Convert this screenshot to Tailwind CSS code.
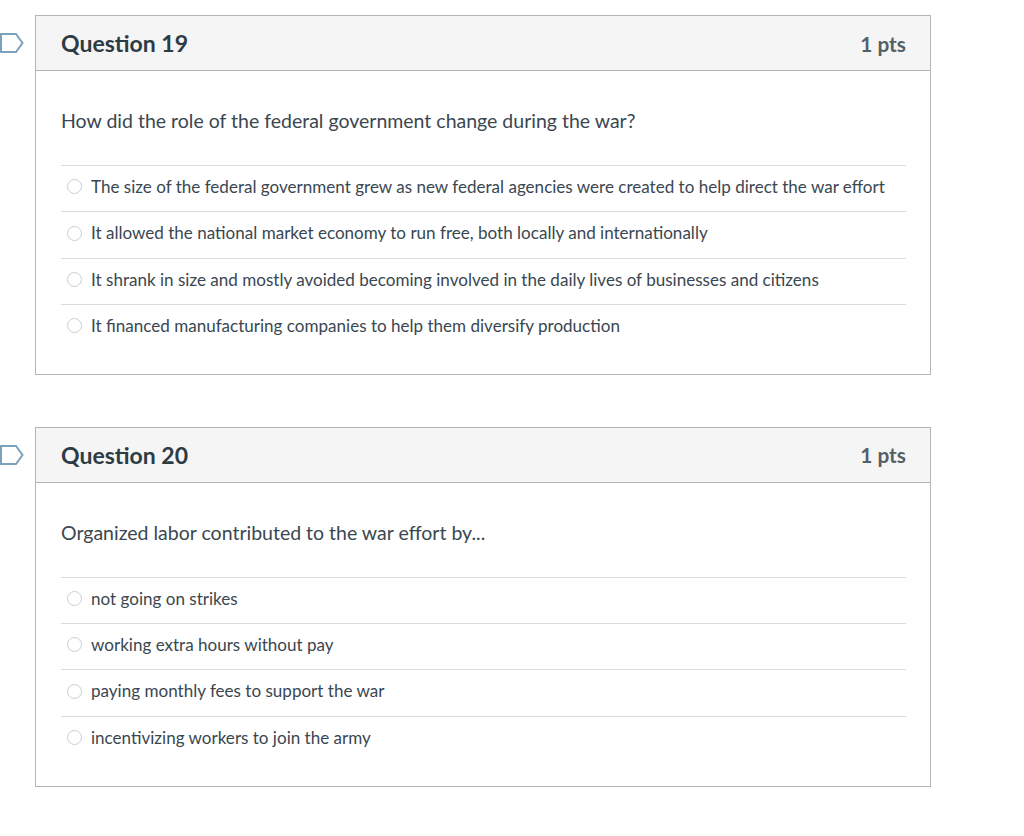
<!DOCTYPE html>
<html lang="en">
<head>
  <meta charset="UTF-8" />
  <title>Quiz</title>
  <script src="https://cdn.jsdelivr.net/npm/@tailwindcss/browser@4"></script>
</head>
<body class="bg-white text-[#2d3b45] font-['Lato',sans-serif]">
  <div class="pt-[15px] pl-[35px] w-[931px]">

    <!-- Question 19 -->
    <div class="relative border border-[#b5b5b5] mb-[52px]">
      <svg class="absolute left-[-36px] top-[16px]" width="24" height="22" viewBox="0 0 24 22" fill="none">
        <path d="M1 2H16L22.5 11L16 20H1Z" stroke="#7aa3bb" stroke-width="2" />
      </svg>
      <div class="flex justify-between items-center h-[55px] pl-[25px] pr-[24px] bg-[#f5f5f5] border-b border-[#b5b5b5]">
        <h2 class="text-[23px] font-bold">Question 19</h2>
        <span class="text-[20.8px] font-bold text-[#555f66] pt-[2px]">1 pts</span>
      </div>
      <div class="pl-[25px] pr-[24px] pt-[36px] pb-[24px]">
        <p class="text-[19.5px] leading-[28px] mb-[30px] text-[#3a4751]">How did the role of the federal government change during the war?</p>
        <div class="text-[17.06px] text-[#3a4751]">
          <div class="flex items-center h-[46px] pb-[4px] border-t border-[#dcdcdc]">
            <span class="w-[15px] h-[15px] rounded-full border border-[#c7cdd1] bg-white ml-[6px] mr-[9px]"></span>
            <span>The size of the federal government grew as new federal agencies were created to help direct the war effort</span>
          </div>
          <div class="flex items-center h-[47px] pb-[4px] border-t border-[#dcdcdc]">
            <span class="w-[15px] h-[15px] rounded-full border border-[#c7cdd1] bg-white ml-[6px] mr-[9px]"></span>
            <span>It allowed the national market economy to run free, both locally and internationally</span>
          </div>
          <div class="flex items-center h-[46px] pb-[4px] border-t border-[#dcdcdc]">
            <span class="w-[15px] h-[15px] rounded-full border border-[#c7cdd1] bg-white ml-[6px] mr-[9px]"></span>
            <span>It shrank in size and mostly avoided becoming involved in the daily lives of businesses and citizens</span>
          </div>
          <div class="flex items-center h-[46px] pb-[4px] border-t border-[#dcdcdc]">
            <span class="w-[15px] h-[15px] rounded-full border border-[#c7cdd1] bg-white ml-[6px] mr-[9px]"></span>
            <span>It financed manufacturing companies to help them diversify production</span>
          </div>
        </div>
      </div>
    </div>

    <!-- Question 20 -->
    <div class="relative border border-[#b5b5b5]">
      <svg class="absolute left-[-36px] top-[16px]" width="24" height="22" viewBox="0 0 24 22" fill="none">
        <path d="M1 2H16L22.5 11L16 20H1Z" stroke="#7aa3bb" stroke-width="2" />
      </svg>
      <div class="flex justify-between items-center h-[55px] pl-[25px] pr-[24px] bg-[#f5f5f5] border-b border-[#b5b5b5]">
        <h2 class="text-[23px] font-bold">Question 20</h2>
        <span class="text-[20.8px] font-bold text-[#555f66]">1 pts</span>
      </div>
      <div class="pl-[25px] pr-[24px] pt-[36px] pb-[24px]">
        <p class="text-[19.5px] leading-[28px] mb-[30px] text-[#3a4751]">Organized labor contributed to the war effort by...</p>
        <div class="text-[17.06px] text-[#3a4751]">
          <div class="flex items-center h-[46px] pb-[4px] border-t border-[#dcdcdc]">
            <span class="w-[15px] h-[15px] rounded-full border border-[#c7cdd1] bg-white ml-[6px] mr-[9px]"></span>
            <span>not going on strikes</span>
          </div>
          <div class="flex items-center h-[46px] pb-[4px] border-t border-[#dcdcdc]">
            <span class="w-[15px] h-[15px] rounded-full border border-[#c7cdd1] bg-white ml-[6px] mr-[9px]"></span>
            <span>working extra hours without pay</span>
          </div>
          <div class="flex items-center h-[47px] pb-[4px] border-t border-[#dcdcdc]">
            <span class="w-[15px] h-[15px] rounded-full border border-[#c7cdd1] bg-white ml-[6px] mr-[9px]"></span>
            <span>paying monthly fees to support the war</span>
          </div>
          <div class="flex items-center h-[46px] pb-[4px] border-t border-[#dcdcdc]">
            <span class="w-[15px] h-[15px] rounded-full border border-[#c7cdd1] bg-white ml-[6px] mr-[9px]"></span>
            <span>incentivizing workers to join the army</span>
          </div>
        </div>
      </div>
    </div>

  </div>
</body>
</html>
